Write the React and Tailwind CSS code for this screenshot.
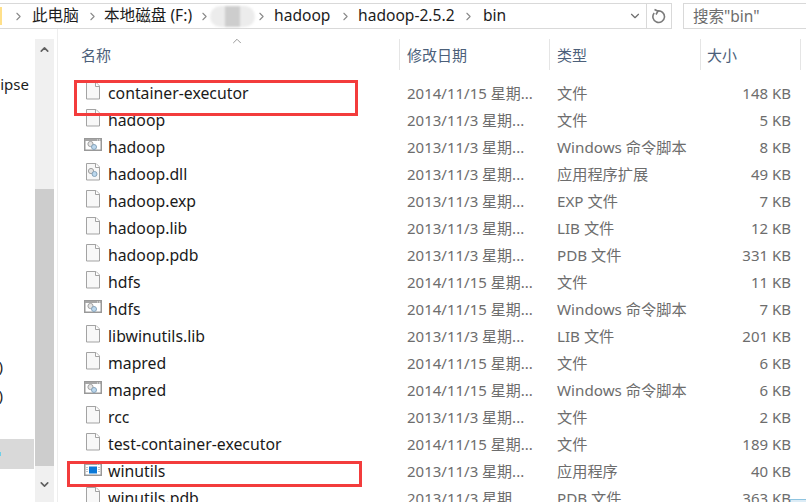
import React from 'react';
import { ChevronRight, ChevronDown, ChevronUp } from 'lucide-react';

const files = [
  ['container-executor', '2014/11/15 星期...', '文件', '148 KB', 'doc'],
  ['hadoop', '2013/11/3 星期...', '文件', '5 KB', 'doc'],
  ['hadoop', '2013/11/3 星期...', 'Windows 命令脚本', '8 KB', 'bat'],
  ['hadoop.dll', '2013/11/3 星期...', '应用程序扩展', '49 KB', 'dll'],
  ['hadoop.exp', '2013/11/3 星期...', 'EXP 文件', '7 KB', 'doc'],
  ['hadoop.lib', '2013/11/3 星期...', 'LIB 文件', '12 KB', 'doc'],
  ['hadoop.pdb', '2013/11/3 星期...', 'PDB 文件', '331 KB', 'doc'],
  ['hdfs', '2014/11/15 星期...', '文件', '11 KB', 'doc'],
  ['hdfs', '2014/11/15 星期...', 'Windows 命令脚本', '7 KB', 'bat'],
  ['libwinutils.lib', '2013/11/3 星期...', 'LIB 文件', '201 KB', 'doc'],
  ['mapred', '2014/11/15 星期...', '文件', '6 KB', 'doc'],
  ['mapred', '2014/11/15 星期...', 'Windows 命令脚本', '6 KB', 'bat'],
  ['rcc', '2013/11/3 星期...', '文件', '2 KB', 'doc'],
  ['test-container-executor', '2014/11/15 星期...', '文件', '189 KB', 'doc'],
  ['winutils', '2013/11/3 星期...', '应用程序', '40 KB', 'exe'],
  ['winutils.pdb', '2013/11/3 星期...', 'PDB 文件', '363 KB', 'doc'],
];

function Gear({ x, y }) {
  return (
    <g>
      <circle cx={x} cy={y} r="2.6" fill="#e4e4e4" stroke="#a0a0a0" />
      <circle cx={x + 3.5} cy={y + 3} r="2.5" fill="#bcd8ee" stroke="#86a3ba" />
    </g>
  );
}

function FileIcon({ type }) {
  if (type === 'bat' || type === 'exe') {
    const bottom = type === 'exe' ? 16 : 15;
    return (
      <svg width="18" height="18" viewBox="0 0 18 18" className="shrink-0 self-start mt-[2px]">
        <rect x="0.750" y="2.750" width="16.500" height={bottom - 3.5} fill="#fff" stroke="#999999" strokeWidth="1.500" />
        <rect x="1" y="3" width="16" height="2" fill="#a6a6a6" />
        <path d="M13 4h1M15 4h1" stroke="#eeeeee" />
        {type === 'bat' ? <Gear x={6.500} y={8} /> : (
          <g>
            <rect x="5" y="6.500" width="8" height="7" fill="#0a78d7" />
            <path d="M14 7.500h2M14 9.500h2M14 11.500h2M2 7.500h2M2 9.500h2M2 11.500h2" stroke="#c4c4c4" />
          </g>
        )}
      </svg>
    );
  }
  return (
    <svg width="18" height="18" viewBox="0 0 18 18" className="shrink-0 self-start mt-[2px]">
      <path d="M2.500 0.500h9.500l3.500 3.500v13h-13z" fill="#f8f8f8" stroke="#a3a3a3" />
      <path d="M11.500 0.500v4h4" fill="#fff" stroke="#a3a3a3" />
      {type === 'dll' && <Gear x={7} y={8} />}
    </svg>
  );
}

function Sep({ className = '' }) {
  return <ChevronRight size={13} strokeWidth={2} className={`text-[#8a8a8a] shrink-0 ${className}`} />;
}

function Crumb({ children, className = '' }) {
  return <span className={`text-[#1c1c1c] text-[15.600px] whitespace-nowrap ${className}`}>{children}</span>;
}

export default function App() {
  return (
    <div className="relative w-[806px] h-[502px] overflow-hidden bg-white text-[15px] font-['Noto_Sans','Noto_Sans_CJK_SC',sans-serif]">
      {/* top bar */}
      <div className="flex items-start h-[29px] pt-[3px]">
        <div className="flex items-center w-[672px] h-[26px] border-y border-r border-[#d9d9d9]">
          <div className="w-[2px] h-[18px] bg-[#ffe08a]" />
          <Sep className="ml-[10px]" />
          <Crumb className="ml-[7px] w-[45px]">此电脑</Crumb>
          <Sep className="ml-[9px]" />
          <Crumb className="ml-[5px] w-[85px]">本地磁盘 (F:)</Crumb>
          <Sep className="ml-[9px]" />
          <div className="flex h-[21px] w-[45px] ml-[-1px] rounded-full overflow-hidden bg-[#ececec] blur-[1px]">
            <div className="w-[15px]" />
            <div className="w-[15px] bg-[#cdcdcd]" />
          </div>
          <Sep className="ml-[0px]" />
          <Crumb className="ml-[6px] w-[57px]">hadoop</Crumb>
          <Sep className="ml-[8px]" />
          <Crumb className="ml-[6px] w-[97px]">hadoop-2.5.2</Crumb>
          <Sep className="ml-[7px]" />
          <Crumb className="ml-[8px]">bin</Crumb>
          <ChevronDown size={14} strokeWidth={2} className="ml-auto mr-[4px] text-[#6d6d6d]" />
          <div className="flex items-center justify-center w-[25px] h-full border-l border-[#d9d9d9]">
            <svg width="16" height="16" viewBox="0 0 16 16" fill="none" stroke="#7a7a7a" strokeWidth="1.600">
              <path d="M6.500 3A5.800 5.800 0 1 1 3.200 5" />
              <path d="M3.500 1.500L7 3.200L5 6.500" />
            </svg>
          </div>
        </div>
        <div className="ml-[11px] flex-1 h-[26px] border-y border-l border-[#d9d9d9] pl-[9px] leading-[24px] text-[15.500px] text-[#6d6d6d]">
          搜索"bin"
        </div>
      </div>

      <div className="flex h-[473px]">
        {/* nav pane, cut off on the left */}
        <div className="w-[35px] shrink-0 flex flex-col text-[#1c1c1c] leading-[26px]">
          <div className="h-[26px] mt-[42px] w-[29px] overflow-hidden flex justify-end">ipse</div>
          <div className="h-[26px] mt-[256px] w-[3px] overflow-hidden flex justify-end">)</div>
          <div className="h-[26px] mt-[3px] w-[3px] overflow-hidden flex justify-end">)</div>
          <div className="h-[30px] mt-[31px] w-[34px] bg-[#d9d9d9] flex items-center">
            <div className="w-[1px] h-[4px] bg-[#6fd0e8]" />
          </div>
        </div>

        {/* nav scrollbar */}
        <div className="w-[19px] shrink-0 mt-[10px] bg-[#f0f0f0] flex flex-col">
          <div className="h-[20px] flex items-center justify-center">
            <ChevronUp size={13} strokeWidth={3} className="text-[#606060]" />
          </div>
          <div className="h-[130px]" />
          <div className="h-[277px] bg-[#cdcdcd]" />
          <div className="flex-1 flex items-center justify-center">
            <ChevronDown size={13} strokeWidth={3} className="text-[#606060]" />
          </div>
        </div>

        <div className="w-[3px] shrink-0" />
        <div className="w-[1px] shrink-0 bg-[#eeeeee]" />

        {/* file list */}
        <div className="flex-1 min-w-0">
          <div className="relative flex h-[31px] mt-[10px] text-[#4c607a] leading-[33px]">
            <ChevronUp size={14} strokeWidth={1.500} className="absolute left-[172px] -top-[5px] text-[#8a8a8a]" />
            <div className="w-[342px] pl-[23px] border-r border-[#e5e5e5]">名称</div>
            <div className="w-[150px] pl-[7px] border-r border-[#e5e5e5]">修改日期</div>
            <div className="w-[151px] pl-[7px] border-r border-[#e5e5e5]">类型</div>
            <div className="w-[100px] pl-[6px] border-r border-[#e5e5e5]">大小</div>
          </div>
          <div className="mt-[10px]">
            {files.map(([name, date, kind, size, icon], i) => (
              <div key={i} className="flex h-[27px] items-center leading-[27px] whitespace-nowrap">
                <div className="w-[342px] pl-[26px] flex items-center gap-[6px] h-full text-[15.800px] text-[#1a1a1a]">
                  <FileIcon type={icon} />
                  <span>{name}</span>
                </div>
                <div className="w-[150px] pl-[7px] text-[#6d6d6d]">{date}</div>
                <div className="w-[151px] pl-[7px] text-[15.200px] text-[#6d6d6d]">{kind}</div>
                <div className="w-[90px] text-right text-[#6d6d6d]">{size}</div>
              </div>
            ))}
          </div>
        </div>
      </div>

      {/* red annotation boxes */}
      <div className="absolute left-[74px] top-[80px] w-[284px] h-[36px] border-[3px] border-[#f33c3c]" />
      <div className="absolute left-[67px] top-[461px] w-[295px] h-[26px] border-[3px] border-[#f33c3c]" />
      <div className="absolute right-0 bottom-0 w-[16px] h-[3px] bg-[#dcecf6] border-t border-l border-[#8ec4e0]" />
    </div>
  );
}
